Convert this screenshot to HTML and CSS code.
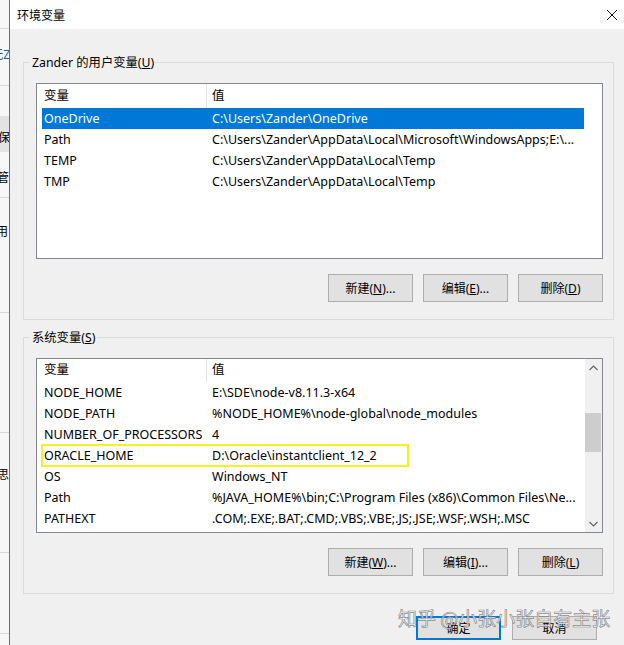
FILE: index.html
```html
<!DOCTYPE html>
<html lang="zh-CN">
<head>
<meta charset="utf-8">
<title>环境变量</title>
<link rel="stylesheet" href="styles.css">
</head>
<body>
<div class="screen">
  <div class="bgwin">
    <div class="bgline l1"></div>
    <div class="bgline l2"></div>
    <div class="bgband"></div>
    <div class="bgline l3"></div>
    <div class="bgline l4"></div>
    <div class="bgline l5"></div>
    <div class="bgline l6"></div>
    <div class="bgline l7"></div>
    <span class="bgtext t1">无Z</span>
    <span class="bgtext t2">保</span>
    <span class="bgtext t3">管</span>
    <span class="bgtext t4">用</span>
    <span class="bgtext t5">思</span>
  </div>
  <div class="win">
    <div class="titlebar">
      <span class="title">环境变量</span>
      <svg class="close" width="12" height="12" viewBox="0 0 12 12"><path d="M1 1 L11 11 M11 1 L1 11" stroke="#111" stroke-width="1" fill="none"/></svg>
    </div>
    <div class="wbody">
      <fieldset class="group">
        <legend>Zander 的用户变量(<u>U</u>)</legend>
        <div class="list">
          <div class="lhead"><div class="hc hname">变量</div><div class="hc hval">值</div></div>
          <div class="row sel"><span class="c1">OneDrive</span><span class="c2">C:\Users\Zander\OneDrive</span></div>
          <div class="row"><span class="c1">Path</span><span class="c2">C:\Users\Zander\AppData\Local\Microsoft\WindowsApps;E:\...</span></div>
          <div class="row"><span class="c1">TEMP</span><span class="c2">C:\Users\Zander\AppData\Local\Temp</span></div>
          <div class="row"><span class="c1">TMP</span><span class="c2">C:\Users\Zander\AppData\Local\Temp</span></div>
        </div>
        <div class="btns">
          <button class="btn">新建(<u>N</u>)...</button>
          <button class="btn">编辑(<u>E</u>)...</button>
          <button class="btn">删除(<u>D</u>)</button>
        </div>
      </fieldset>
      <fieldset class="group g2">
        <legend>系统变量(<u>S</u>)</legend>
        <div class="list slist">
          <div class="lcontent">
            <div class="lhead"><div class="hc hname">变量</div><div class="hc hval">值</div></div>
            <div class="row"><span class="c1">NODE_HOME</span><span class="c2">E:\SDE\node-v8.11.3-x64</span></div>
            <div class="row"><span class="c1">NODE_PATH</span><span class="c2">%NODE_HOME%\node-global\node_modules</span></div>
            <div class="row"><span class="c1">NUMBER_OF_PROCESSORS</span><span class="c2">4</span></div>
            <div class="row"><span class="c1">ORACLE_HOME</span><span class="c2">D:\Oracle\instantclient_12_2</span><span class="mark"></span></div>
            <div class="row"><span class="c1">OS</span><span class="c2">Windows_NT</span></div>
            <div class="row"><span class="c1">Path</span><span class="c2">%JAVA_HOME%\bin;C:\Program Files (x86)\Common Files\Ne...</span></div>
            <div class="row"><span class="c1">PATHEXT</span><span class="c2">.COM;.EXE;.BAT;.CMD;.VBS;.VBE;.JS;.JSE;.WSF;.WSH;.MSC</span></div>
            <div class="row"><span class="c1">PROCESSOR_ARCHITECTURE</span><span class="c2">AMD64</span></div>
          </div>
          <div class="vscroll">
            <div class="arrow"><svg width="9" height="6" viewBox="0 0 9 6"><path d="M0.5 5 L4.5 1 L8.5 5" stroke="#606060" stroke-width="1.1" fill="none"/></svg></div>
            <div class="track"><div class="thumb"></div></div>
            <div class="arrow"><svg width="9" height="6" viewBox="0 0 9 6"><path d="M0.5 1 L4.5 5 L8.5 1" stroke="#606060" stroke-width="1.1" fill="none"/></svg></div>
          </div>
        </div>
        <div class="btns">
          <button class="btn">新建(<u>W</u>)...</button>
          <button class="btn">编辑(<u>I</u>)...</button>
          <button class="btn">删除(<u>L</u>)</button>
        </div>
      </fieldset>
      <div class="dlg">
        <button class="btn default">确定</button>
        <button class="btn">取消</button>
      </div>
    </div>
  </div>
  <div class="watermark">知乎 @小张小张自有主张</div>
</div>
</body>
</html>
```
FILE: styles.css
```css
* { box-sizing: border-box; }
html, body { margin: 0; padding: 0; }
body {
  width: 624px;
  height: 645px;
  overflow: hidden;
  background: #f0f0f0;
  font-family: "Noto Sans", "Noto Sans CJK SC", sans-serif;
  font-size: 12px;
  color: #000;
}
.screen {
  display: flex;
  height: 645px;
  position: relative;
}

/* background window, clipped at the left edge */
.bgwin {
  width: 9px;
  flex: none;
  background: #f7f7f7;
  position: relative;
  overflow: hidden;
}
.bgline { position: absolute; left: 0; right: 0; height: 1px; background: #d9d9d9; }
.l1 { top: 28px; }
.l2 { top: 85px; }
.l3 { top: 197px; }
.l4 { top: 312px; }
.l5 { top: 432px; }
.l6 { top: 552px; }
.l7 { top: 633px; }
.bgband { position: absolute; left: 0; right: 0; top: 116px; height: 36px; background: #e3e3e3; }
.bgtext { position: absolute; white-space: nowrap; line-height: 16px; font-size: 12px; }
.t1 { top: 47px; right: -1px; color: #2b5c9e; }
.t2 { top: 130px; left: -2px; }
.t3 { top: 170px; left: -3px; }
.t4 { top: 224px; left: -4px; }
.t5 { top: 467px; left: -3px; }

/* dialog window */
.win {
  flex: none;
  width: 626px;
  border-left: 1px solid #6e6e6e;
  background: #f0f0f0;
}
.titlebar {
  height: 29px;
  background: #fff;
  display: flex;
  align-items: center;
  padding-left: 7px;
}
.title { font-size: 12px; }
.close { margin-left: auto; margin-right: 17px; }

.wbody { padding: 25px 0 0 13px; }

.group {
  width: 591px;
  margin: 0;
  padding: 12px 10px 17px 12px;
  border: 1px solid #dcdcdc;
  min-width: 0;
}
.g2 { margin-top: 9px; }
.group legend {
  padding: 0 2px;
  margin-left: -6px;
  line-height: 17px;
  font-size: 12.3px;
}

.list {
  height: 176px;
  border: 1px solid #828790;
  background: #fff;
  overflow: hidden;
  font-size: 12.5px;
}
.slist { display: flex; height: 175px; }
.lcontent { flex: 1; min-width: 0; overflow: hidden; margin-top: -1px; }

.lhead { height: 24px; display: flex; line-height: 24px; }
.hc { white-space: nowrap; }
.hname { width: 170px; padding-left: 7px; border-right: 1px solid #e5e5e5; }
.hval { padding-left: 5px; }

.row {
  position: relative;
  height: 21px;
  width: 542px;
  margin-left: 5px;
  display: grid;
  grid-template-columns: 164px 1fr;
  line-height: 21px;
  white-space: nowrap;
}
.row span { overflow: hidden; }
.c1 { padding-left: 2px; }
.c2 { padding-left: 6px; }
.sel { background: #0078d7; color: #fff; }
.mark {
  position: absolute;
  left: -1px;
  top: -1px;
  width: 368px;
  height: 23px;
  border: 2.5px solid #f3f324;
}

.vscroll {
  width: 17px;
  flex: none;
  background: #f0f0f0;
  display: flex;
  flex-direction: column;
}
.arrow { height: 17px; display: flex; align-items: center; justify-content: center; }
.track { flex: 1; }
.thumb { margin-top: 37px; height: 39px; background: #cdcdcd; width: 16px; }

.btns {
  display: flex;
  justify-content: flex-end;
  gap: 10px;
  margin-top: 15px;
}
.btn {
  width: 85px;
  height: 28px;
  border: 1px solid #adadad;
  background: #e1e1e1;
  font-family: "Noto Sans", "Noto Sans CJK SC", sans-serif;
  font-size: 12px;
  color: #000;
  padding: 0;
  margin: 0;
}
.dlg {
  width: 591px;
  display: flex;
  justify-content: flex-end;
  gap: 11px;
  padding-right: 17px;
  margin-top: 22px;
}
.dlg .btn { height: 24px; }
.btn.default { border: 2px solid #0078d7; }

.watermark {
  position: absolute;
  left: 398px;
  top: 605px;
  font-family: "Noto Sans CJK SC", sans-serif;
  font-size: 19px;
  line-height: 26px;
  white-space: nowrap;
  color: rgba(255, 255, 255, 0.88);
  -webkit-text-stroke: 0.7px rgba(110, 110, 110, 0.8);
}
```
